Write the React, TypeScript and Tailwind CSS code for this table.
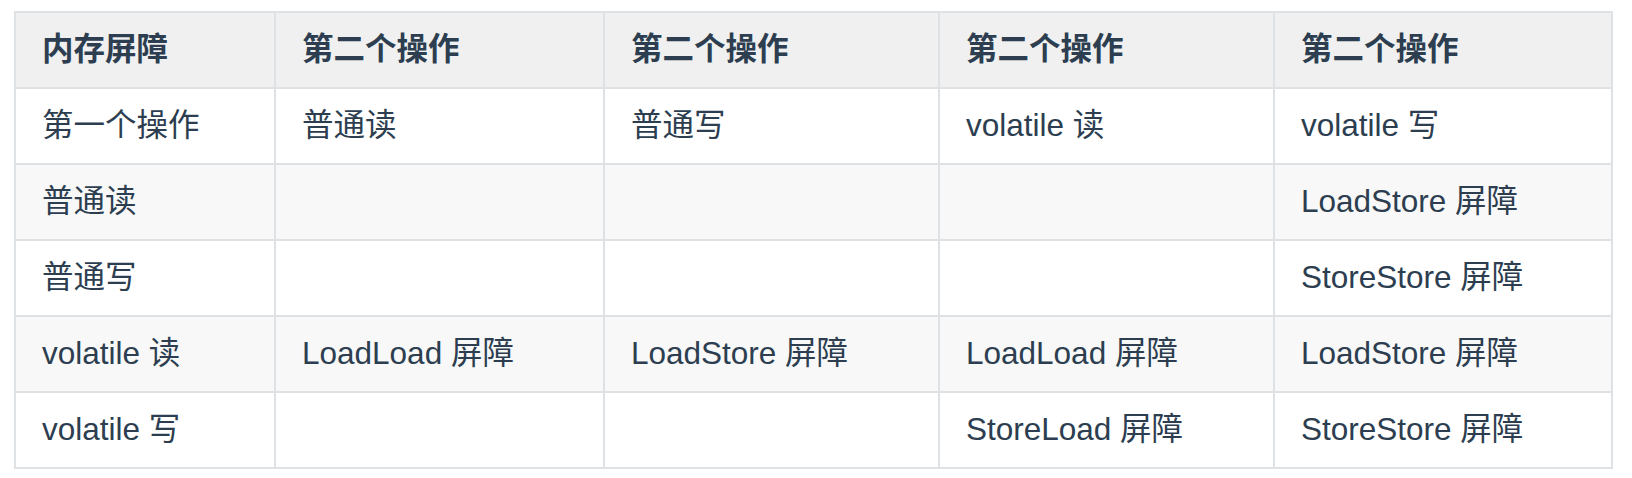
import React from 'react';

const header = ['内存屏障', '第二个操作', '第二个操作', '第二个操作', '第二个操作'];

const rows: string[][] = [
  ['第一个操作', '普通读', '普通写', 'volatile 读', 'volatile 写'],
  ['普通读', '', '', '', 'LoadStore 屏障'],
  ['普通写', '', '', '', 'StoreStore 屏障'],
  ['volatile 读', 'LoadLoad 屏障', 'LoadStore 屏障', 'LoadLoad 屏障', 'LoadStore 屏障'],
  ['volatile 写', '', '', 'StoreLoad 屏障', 'StoreStore 屏障'],
];

const cellBase =
  'h-[76px] flex items-center pl-[26px] border-r-2 border-b-2 border-[#dfe2e5] whitespace-nowrap';

export default function App() {
  return (
    <div className="w-[1632px] h-[478px] bg-white pt-[11px] pl-[14px] text-[#2c3e50] text-[31.5px] font-['Liberation_Sans','Noto_Sans_CJK_SC',sans-serif]">
      <div className="grid grid-cols-[260px_329px_335px_335px_338px] w-fit border-l-2 border-t-2 border-[#dfe2e5]">
        {/* header */}
        {header.map((h, i) => (
          <div key={`h${i}`} className={`${cellBase} bg-[#f0f0f0] font-bold`}>
            {h}
          </div>
        ))}

        {/* body rows, every second one striped */}
        {rows.map((row, r) =>
          row.map((cell, c) => (
            <div
              key={`${r}-${c}`}
              className={`${cellBase} ${r % 2 === 1 ? 'bg-[#f8f8f8]' : 'bg-white'}`}
            >
              {cell}
            </div>
          ))
        )}
      </div>
    </div>
  );
}
